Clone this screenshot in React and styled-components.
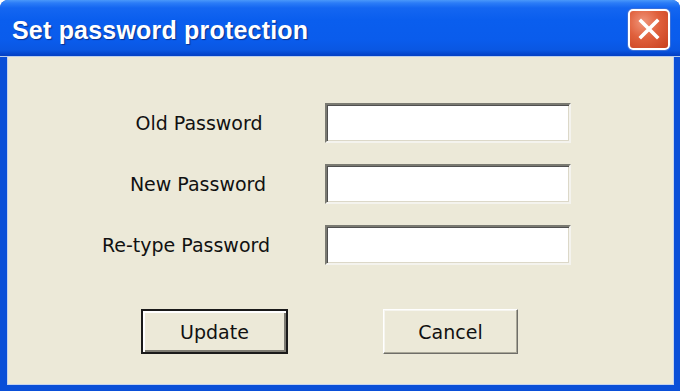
import styled, { createGlobalStyle } from "styled-components";

const Global = createGlobalStyle`
  html, body {
    margin: 0;
    padding: 0;
    background: #ffffff;
  }
  body {
    font-family: "DejaVu Sans", Verdana, sans-serif;
  }
`;

const Window = styled.div`
  width: 680px;
  height: 391px;
  display: flex;
  flex-direction: column;
  background: #0a4fd8;
  border-radius: 8px 8px 0 0;
  overflow: hidden;
`;

const TitleBar = styled.div`
  height: 57px;
  flex: none;
  display: flex;
  align-items: center;
  justify-content: space-between;
  padding: 3px 10px 0 12px;
  box-sizing: border-box;
  background: linear-gradient(
    to bottom,
    #4a98fa 0px,
    #2b7cf7 3px,
    #1466f1 8px,
    #0a5eee 20px,
    #0a5cec 40px,
    #0a57e2 50px,
    #0546cd 54px,
    #0340c4 56px,
    #b9cdec 56px,
    #b9cdec 57px
  );
`;

const Title = styled.h1`
  margin: 0;
  color: #ffffff;
  font-family: "Liberation Sans", Arial, sans-serif;
  font-weight: bold;
  font-size: 25px;
  letter-spacing: 0.2px;
  text-shadow: 1px 1px 1px #0a2f8a;
`;

const CloseButton = styled.button`
  width: 42px;
  height: 41px;
  margin-top: -2px;
  padding: 0;
  border: 2px solid #ffffff;
  border-radius: 5px;
  background: radial-gradient(circle at 35% 30%, #f0957a 0%, #e0603c 45%, #c8401e 100%);
  display: flex;
  align-items: center;
  justify-content: center;
  box-shadow: 0 0 0 1px #3a6fd8;
`;

const Body = styled.div`
  flex: 1;
  margin: 0 6px 6px 7px;
  background: #ece9d8;
  box-shadow: inset 1px 0 0 #c4d3ef, inset -1px 0 0 #c4d3ef, inset 0 -1px 0 #c4d3ef;
  display: flex;
  flex-direction: column;
`;

const Form = styled.div`
  display: grid;
  grid-template-columns: 220px 246px;
  column-gap: 18px;
  row-gap: 21px;
  padding: 46px 0 0 80px;
  align-items: center;
`;

// labels sit roughly centred in their column, each nudged a little
const Label = styled.label`
  text-align: center;
  font-size: 19px;
  color: #111111;
  white-space: nowrap;
  padding-left: ${(p) => (p.$nudge > 0 ? p.$nudge * 2 : 0)}px;
  padding-right: ${(p) => (p.$nudge < 0 ? -p.$nudge * 2 : 0)}px;
`;

const Field = styled.input`
  width: 246px;
  height: 40px;
  box-sizing: border-box;
  background: #ffffff;
  border-style: solid;
  border-width: 2px;
  border-color: #7a7a72 #f4f3ee #f4f3ee #7a7a72;
  box-shadow: inset 1px 1px 0 #505050, inset -1px -1px 0 #dcd8c8;
  outline: none;
  font-size: 18px;
`;

const Buttons = styled.div`
  display: flex;
  gap: 95px;
  padding: 44px 0 0 134px;
`;

const Button = styled.button`
  width: ${(p) => (p.$default ? 147 : 135)}px;
  height: 45px;
  box-sizing: border-box;
  font-family: "DejaVu Sans", Verdana, sans-serif;
  font-size: 19px;
  color: #111111;
  background: #ece9d8;
  padding: 0;
  border-style: solid;
  border-width: ${(p) => (p.$default ? "2px" : "1px")};
  border-color: ${(p) =>
    p.$default ? "#1a1a1a" : "#ffffff #6f6e68 #6f6e68 #ffffff"};
  box-shadow: ${(p) =>
    p.$default
      ? "inset 2px 2px 0 #ffffff, inset -2px -2px 0 #7d7b72"
      : "inset -1px -1px 0 #a9a798, inset 1px 1px 0 #f6f5ef"};
`;

export default function App() {
  return (
    <>
      <Global />
      <Window>
        <TitleBar>
          <Title>Set password protection</Title>
          <CloseButton aria-label="Close">
            <svg width="24" height="24" viewBox="0 0 24 24">
              <path
                d="M4 4 L20 20 M20 4 L4 20"
                stroke="#ffffff"
                strokeWidth="3.6"
                strokeLinecap="square"
              />
            </svg>
          </CloseButton>
        </TitleBar>
        <Body>
          <Form>
            <Label $nudge={2}>Old Password</Label>
            <Field type="password" />
            <Label $nudge={1}>New Password</Label>
            <Field type="password" />
            <Label $nudge={-11}>Re-type Password</Label>
            <Field type="password" />
          </Form>
          <Buttons>
            <Button $default>Update</Button>
            <Button>Cancel</Button>
          </Buttons>
        </Body>
      </Window>
    </>
  );
}
